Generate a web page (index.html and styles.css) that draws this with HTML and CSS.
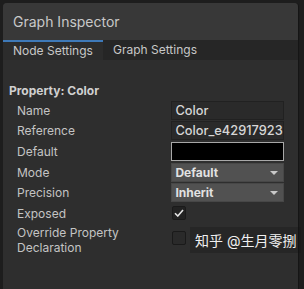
FILE: index.html
```html
<!DOCTYPE html>
<html lang="en">
<head>
    <meta charset="UTF-8">
    <title>Graph Inspector</title>
    <link rel="stylesheet" href="styles.css">
</head>
<body>
    <div class="panel">
        <div class="header">Graph Inspector</div>
        <div class="tabs">
            <div class="tab active">Node Settings</div>
            <div class="tab">Graph Settings</div>
        </div>
        <div class="content">
            <div class="section-title">Property: Color</div>
            <div class="row">
                <div class="label">Name</div>
                <div class="field text">Color</div>
            </div>
            <div class="row">
                <div class="label">Reference</div>
                <div class="field text">Color_e429179239</div>
            </div>
            <div class="row">
                <div class="label">Default</div>
                <div class="field swatch"></div>
            </div>
            <div class="row">
                <div class="label">Mode</div>
                <div class="field dropdown">Default<span class="arrow"></span></div>
            </div>
            <div class="row">
                <div class="label">Precision</div>
                <div class="field dropdown">Inherit<span class="arrow"></span></div>
            </div>
            <div class="row">
                <div class="label">Exposed</div>
                <div class="check checked">
                    <svg width="10" height="8" viewBox="0 0 10 8"><path d="M1 4.2 L3.8 7 L9 1" fill="none" stroke="#e6e6e6" stroke-width="1.6"/></svg>
                </div>
            </div>
            <div class="row tall">
                <div class="label">Override Property<br>Declaration</div>
                <div class="check"></div>
            </div>
        </div>
        <div class="watermark">知乎 @生月零捌</div>
    </div>
</body>
</html>
```

FILE: styles.css
```css
html, body {
    margin: 0;
    height: 100%;
}
body {
    background-color: #1d1d1d;
    font-family: Inter, "Noto Sans CJK SC", sans-serif;
    color: #c4c4c4;
    overflow: hidden;
}
.panel {
    position: relative;
    margin: 3px 5px 0 3px;
    height: 286px;
    background-color: #2e2e2e;
    border-radius: 4px 4px 0 0;
    border-right: 1px solid #151515;
}
.header {
    height: 37px;
    line-height: 37px;
    padding-left: 10px;
    font-size: 14px;
    color: #c8c8c8;
    background-color: #383838;
    border-radius: 4px 4px 0 0;
}
.tabs {
    display: flex;
    height: 20px;
    background-color: #262626;
}
.tab {
    padding: 0 10px;
    font-size: 12px;
    line-height: 20px;
    color: #c8c8c8;
    white-space: nowrap;
}
.tab.active {
    box-sizing: border-box;
    width: 100px;
    background-color: #2c2c2c;
    border-top: 2px solid #3e79b8;
    line-height: 18px;
}
.content {
    padding: 22px 14px 0 6px;
    font-size: 12px;
}
.section-title {
    font-weight: bold;
    color: #d0d0d0;
    height: 18px;
    line-height: 18px;
}
.row {
    display: flex;
    align-items: center;
    height: 20.6px;
}
.row.tall {
    height: 34px;
    align-items: flex-start;
    padding-top: 1px;
}
.label {
    width: 155px;
    padding-left: 8px;
    line-height: 15px;
}
.field {
    box-sizing: border-box;
    width: 113px;
    height: 19px;
    line-height: 17px;
    padding-left: 3px;
    white-space: nowrap;
    overflow: hidden;
}
.field.text {
    background-color: #2a2a2a;
    border: 1px solid #212121;
    color: #d6d6d6;
    font-size: 12.8px;
    font-weight: 500;
}
.field.swatch {
    background-color: #000;
    border: 1px solid #a8a8a8;
}
.field.dropdown {
    position: relative;
    background-color: #515151;
    border: 1px solid #474747;
    color: #e2e2e2;
    font-weight: bold;
}
.arrow {
    position: absolute;
    right: 5px;
    top: 7px;
    border-left: 4px solid transparent;
    border-right: 4px solid transparent;
    border-top: 4px solid #c8c8c8;
}
.check {
    box-sizing: border-box;
    width: 14px;
    height: 14px;
    background-color: #222;
    border: 1px solid #1a1a1a;
    border-radius: 2px;
    display: flex;
    align-items: center;
    justify-content: center;
}
.row.tall .check {
    margin-top: 6px;
    background-color: #2a2a2a;
}
.watermark {
    position: absolute;
    left: 187px;
    top: 224px;
    padding: 3px 5px;
    font-size: 14px;
    color: #f0f0f0;
    white-space: nowrap;
    background-color: rgba(20, 20, 20, 0.3);
}
```
